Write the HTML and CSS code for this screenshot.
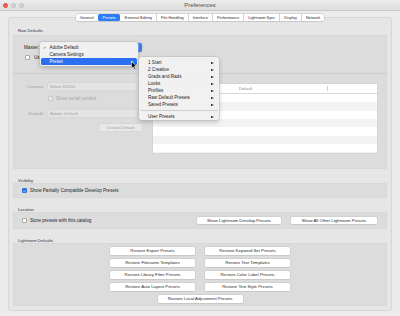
FILE: index.html
```html
<!DOCTYPE html>
<html>
<head>
<meta charset="utf-8">
<title>Preferences</title>
<link rel="stylesheet" href="styles.css">
</head>
<body>
<div class="window">
  <div class="titlebar">
    <div class="lights"><span class="light red"></span><span class="light"></span><span class="light"></span></div>
    <div class="title">Preferences</div>
    <div></div>
  </div>
  <div class="content">
    <div class="tabs">
      <span class="tab">General</span>
      <span class="tab active">Presets</span>
      <span class="tab">External Editing</span>
      <span class="tab">File Handling</span>
      <span class="tab">Interface</span>
      <span class="tab">Performance</span>
      <span class="tab">Lightroom Sync</span>
      <span class="tab">Display</span>
      <span class="tab">Network</span>
    </div>
    <div class="panel">
      <div class="glabel first">Raw Defaults</div>
      <div class="box raw">
        <div class="raw-top">
          <div class="master-row">
            <span class="master-lbl">Master:</span>
            <div class="popup master-popup"><span class="pcap"></span></div>
          </div>
          <div class="use-row"><span class="cb"></span><span class="txt">Use defaults specific to camera model</span></div>
        </div>
        <div class="raw-bottom">
          <div class="raw-left">
            <div class="field-row">
              <span class="flbl">Camera:</span>
              <div class="popup dis"><span>Nikon D5300</span><svg class="updown" viewBox="0 0 4 8" width="2" height="4"><path d="M0.5 3 L2 1 L3.5 3 M0.5 5 L2 7 L3.5 5" fill="none" stroke="#9a9a9a" stroke-width="0.9"/></svg></div>
            </div>
            <div class="serial-row"><span class="cb dis"></span><span class="txt dis">Show serial number</span></div>
            <div class="field-row r2">
              <span class="flbl">Default:</span>
              <div class="popup dis"><span>Adobe Default</span><svg class="updown" viewBox="0 0 4 8" width="2" height="4"><path d="M0.5 3 L2 1 L3.5 3 M0.5 5 L2 7 L3.5 5" fill="none" stroke="#9a9a9a" stroke-width="0.9"/></svg></div>
            </div>
            <div class="btn create">Create Default</div>
          </div>
          <div class="table">
            <div class="thead"><span class="th th1"></span><span class="th th2">Default</span><span class="th th3"></span></div>
            <div class="tbody"></div>
          </div>
        </div>
      </div>

      <div class="glabel">Visibility</div>
      <div class="box vis">
        <span class="cb on"><svg viewBox="0 0 10 10" width="5" height="5"><path d="M2.3 5.2 L4.2 7.1 L7.8 2.8" fill="none" stroke="#fff" stroke-width="1.5" stroke-linecap="round" stroke-linejoin="round"/></svg></span>
        <span class="txt">Show Partially Compatible Develop Presets</span>
      </div>

      <div class="glabel">Location</div>
      <div class="box loc">
        <span class="cb"></span>
        <span class="txt">Store presets with this catalog</span>
        <span class="btn b84 push">Show Lightroom Develop Presets</span>
        <span class="btn b86">Show All Other Lightroom Presets</span>
      </div>

      <div class="glabel">Lightroom Defaults</div>
      <div class="box lr">
        <span class="btn">Restore Export Presets</span>
        <span class="btn">Restore Keyword Set Presets</span>
        <span class="btn">Restore Filename Templates</span>
        <span class="btn">Restore Text Templates</span>
        <span class="btn">Restore Library Filter Presets</span>
        <span class="btn">Restore Color Label Presets</span>
        <span class="btn">Restore Auto Layout Presets</span>
        <span class="btn">Restore Text Style Presets</span>
        <span class="btn wide">Restore Local Adjustment Presets</span>
      </div>
    </div>
  </div>

  <div class="menu main-menu">
    <div class="mi"><span class="chk">&#10003;</span><span>Adobe Default</span></div>
    <div class="mi"><span class="chk"></span><span>Camera Settings</span></div>
    <div class="mi hl"><span class="chk"></span><span>Preset</span><span class="arr"></span></div>
  </div>

  <div class="menu sub-menu">
    <div class="mi"><span>1 Start</span><span class="arr"></span></div>
    <div class="mi"><span>2 Creative</span><span class="arr"></span></div>
    <div class="mi"><span>Grads and Rads</span><span class="arr"></span></div>
    <div class="mi"><span>Looks</span><span class="arr"></span></div>
    <div class="mi"><span>Profiles</span><span class="arr"></span></div>
    <div class="mi"><span>Raw Default Presets</span><span class="arr"></span></div>
    <div class="mi"><span>Saved Presets</span><span class="arr"></span></div>
    <div class="msep"></div>
    <div class="mi"><span>User Presets</span><span class="arr"></span></div>
  </div>

  <svg class="cursor" width="6" height="9" viewBox="0 0 12 18"><path d="M1 1 L1 15 L4.5 11.7 L7 17 L9.2 16 L6.7 10.7 L11 10.7 Z" fill="#000" stroke="#fff" stroke-width="1.1" stroke-linejoin="round"/></svg>
</div>
</body>
</html>
```
FILE: styles.css
```css
* { box-sizing: border-box; }
html, body { margin: 0; padding: 0; }
body {
  width: 400px;
  height: 316px;
  overflow: hidden;
  background: #ececec;
  font-family: "Liberation Sans", Arial, sans-serif;
  color: #262626;
}
.window {
  position: relative;
  width: 400px;
  height: 316px;
  display: flex;
  flex-direction: column;
}

/* title bar */
.titlebar {
  height: 11px;
  flex: none;
  background: linear-gradient(#ececec, #dedede);
  border-bottom: 1px solid #c8c8c8;
  display: grid;
  grid-template-columns: 1fr auto 1fr;
  align-items: center;
}
.lights { display: flex; gap: 3px; padding-left: 3px; }
.light {
  width: 5px; height: 5px; border-radius: 50%;
  background: #d6d6d6; border: 0.5px solid #c2c2c2;
}
.light.red { background: #fd5c55; border-color: #e2463f; }
.title { font-size: 5.8px; color: #4d4d4d; line-height: 10px; }

/* content */
.content {
  flex: 1;
  display: flex;
  flex-direction: column;
  padding: 3px 8px 5px;
}
.tabs {
  align-self: center;
  display: flex;
  height: 7px;
  background: #fff;
  border-radius: 1.5px;
  box-shadow: 0 0 0 0.5px #c0c0c0, 0 0.5px 0.8px rgba(0,0,0,.18);
  position: relative;
  z-index: 1;
}
.tab {
  font-size: 3.9px;
  line-height: 7px;
  padding: 0 4px;
  border-left: 0.5px solid #d4d4d4;
  white-space: nowrap;
  color: #2a2a2a;
}
.tab:first-child { border-left: none; }
.tab.active { background: #2f7cf6; color: #fff; border-radius: 1.5px; border-left-color: transparent; }
.tab.active + .tab { border-left-color: transparent; }

.panel {
  margin-top: -4px;
  flex: 1;
  background: #e6e6e6;
  border: 1px solid #d6d6d6;
  border-radius: 3px;
  padding: 0 4px 4px;
  display: flex;
  flex-direction: column;
}
.glabel {
  font-size: 4.2px;
  line-height: 5px;
  height: 5px;
  padding-left: 5px;
  margin-top: 8.5px;
  color: #333;
}
.glabel.first { margin-top: 9.5px; }
.box {
  margin-top: 0.5px;
  background: #dcdcdc;
  border-radius: 2px;
  box-shadow: inset 0 0 0 0.5px #d3d3d3;
}
.txt { font-size: 4.6px; white-space: nowrap; color: #262626; }
.txt.dis { color: #a6a6a6; }

.cb {
  flex: none;
  width: 5px; height: 5px;
  background: #fff;
  border: 0.5px solid #a9a9a9;
  border-radius: 1px;
  display: flex;
}
.cb.dis { background: #ececec; border-color: #c8c8c8; }
.cb.on { background: #2f7cf6; border-color: #2a6fdf; }

/* raw defaults */
.raw { margin-top: 2.5px; height: 134px; display: flex; flex-direction: column; }
.raw-top {
  height: 39px;
  border-bottom: 1px solid #cdcdcd;
  padding-left: 11px;
  padding-top: 8px;
}
.master-row { display: flex; align-items: center; height: 9px; }
.master-lbl { font-size: 4.6px; width: 22px; color: #262626; }
.popup {
  height: 9px;
  background: #fff;
  border-radius: 1.5px;
  box-shadow: 0 0 0 0.5px #c4c4c4;
  display: flex;
  align-items: center;
  justify-content: space-between;
}
.master-popup { width: 96px; justify-content: flex-end; }
.pcap { width: 6px; height: 9px; background: #3b82f7; border-radius: 0 1.5px 1.5px 0; }
.use-row { display: flex; align-items: center; gap: 4px; margin-top: 3px; padding-left: 1px; height: 5px; }

.raw-bottom { flex: 1; display: flex; align-items: flex-start; }
.raw-left { width: 129px; display: flex; flex-direction: column; }
.field-row { display: flex; align-items: center; margin-top: 9px; height: 7px; }
.field-row.r2 { margin-top: 9px; }
.flbl { width: 31px; text-align: right; font-size: 4.4px; color: #a0a0a0; }
.popup.dis {
  margin-left: 4px;
  width: 92px;
  height: 7px;
  background: #e4e4e4;
  box-shadow: 0 0 0 0.5px #cfcfcf;
  padding: 0 1.5px 0 2px;
  font-size: 4.4px;
  color: #a3a3a3;
}
.serial-row { display: flex; align-items: center; gap: 3px; margin-top: 6px; height: 5px; padding-left: 35px; }
.btn {
  display: block;
  height: 7.5px;
  background: #fff;
  border-radius: 1.5px;
  box-shadow: 0 0 0 0.5px #c6c6c6, 0 0.5px 0.6px rgba(0,0,0,.14);
  font-size: 4.3px;
  line-height: 7.5px;
  text-align: center;
  white-space: nowrap;
  color: #2a2a2a;
}
.btn.create {
  align-self: flex-end;
  width: 43px;
  height: 7px;
  line-height: 7px;
  margin-top: 7px;
  margin-right: -0px;
  background: #e8e8e8;
  color: #a3a3a3;
  box-shadow: 0 0 0 0.5px #cfcfcf;
}
.table {
  margin-left: 11px;
  margin-top: 10px;
  width: 224px;
  height: 69px;
  background: #fff;
  box-shadow: 0 0 0 0.5px #cdcdcd;
  display: flex;
  flex-direction: column;
}
.thead { height: 10px; display: flex; align-items: center; border-bottom: 0.5px solid #d9d9d9; }
.th { font-size: 4.2px; color: #8a8a8a; height: 5px; line-height: 5px; }
.th1 { width: 86px; }
.th2 { width: 89px; border-right: 0.5px solid #cfcfcf; }
.tbody {
  flex: 1;
  background: repeating-linear-gradient(#fff 0, #fff 8.33px, #f3f3f3 8.33px, #f3f3f3 16.66px);
}

/* visibility / location */
.vis { height: 15px; display: flex; align-items: center; gap: 3px; padding-left: 9px; }
.loc { height: 17px; display: flex; align-items: center; gap: 3px; padding: 0 10px 0 9px; }
.push { margin-left: auto; }
.b84 { width: 84px; margin-right: 7px; }
.b86 { width: 86px; }

/* lightroom defaults */
.lr {
  height: 63px;
  display: grid;
  grid-template-columns: 85px 85px;
  column-gap: 10px;
  row-gap: 4px;
  grid-auto-rows: 8px;
  justify-content: center;
  align-content: start;
  padding-top: 4px;
}
.lr .btn { height: 7.5px; }
.lr .wide { grid-column: 1 / span 2; justify-self: center; width: 85px; }

/* menus (overlay) */
.menu {
  position: absolute;
  background: rgba(241,241,241,0.98);
  border-radius: 3px;
  box-shadow: 0 0 0 0.5px #bdbdbd, 0 2px 5px rgba(0,0,0,.22);
  padding: 2px 1px 1px;
  font-size: 4.6px;
  color: #1e1e1e;
  z-index: 5;
}
.main-menu { left: 40px; top: 42px; width: 98px; height: 24px; }
.sub-menu { left: 139px; top: 57px; width: 80px; height: 63px; z-index: 6; }
.mi { height: 7px; display: flex; align-items: center; white-space: nowrap; }
.main-menu .mi { padding-right: 3px; }
.sub-menu .mi { padding-left: 8px; padding-right: 4.5px; }
.chk { width: 8.5px; padding-left: 1.5px; font-size: 4.4px; }
.mi.hl { background: #2c6ff0; color: #fff; border-radius: 1.5px; }
.arr {
  margin-left: auto;
  width: 0; height: 0;
  border-left: 3px solid #111;
  border-top: 1.7px solid transparent;
  border-bottom: 1.7px solid transparent;
}
.mi.hl .arr { border-left-color: #fff; }
.msep { height: 0; margin: 1.5px 0 2.5px; border-top: 0.5px solid #cfcfcf; }

.cursor { position: absolute; left: 131px; top: 61px; z-index: 10; }
.updown { flex: none; }
```
